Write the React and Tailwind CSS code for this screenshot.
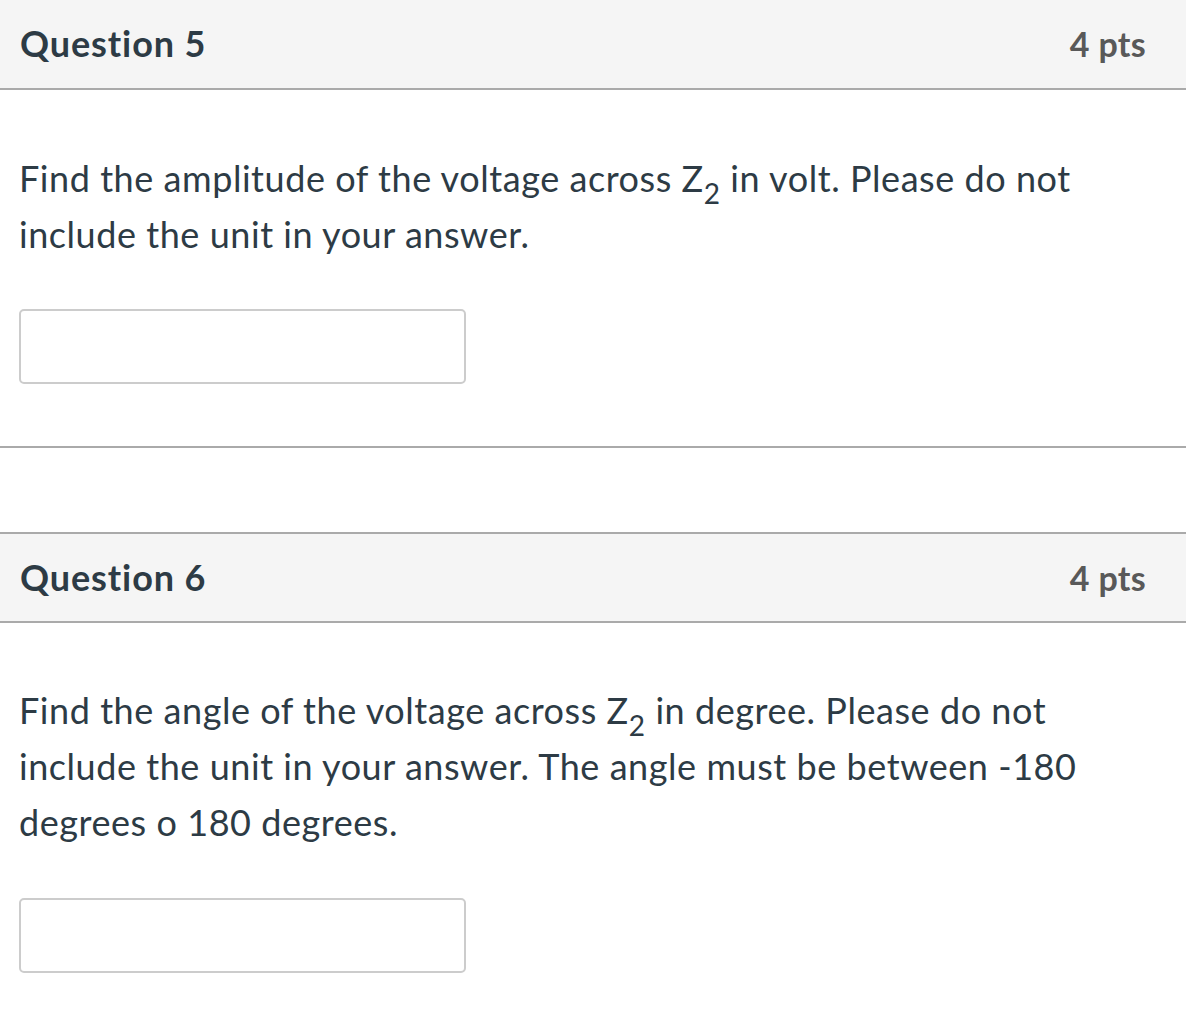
export default function App() {
  const font = { fontFamily: "Lato, 'Noto Sans', sans-serif" };
  return (
    <div className="w-[1186px] h-[1010px] bg-white overflow-hidden text-[#2d3b45]" style={font}>
      <div className="bg-[#f5f5f5] border-b-2 border-[#aaaaaa] h-[90px] flex items-center justify-between pl-[20px] pr-[40px]">
        <div className="text-[36px] font-bold leading-none tracking-[0.9px] pb-[2px]">Question 5</div>
        <div className="text-[34px] font-bold text-[#595959] leading-none tracking-[0.3px]">4 pts</div>
      </div>
      <div className="pl-[19px] pt-[60px]">
        <p className="text-[36px] leading-[56px] tracking-[0.55px] w-[1120px]">
          Find the amplitude of the voltage across Z<sub className="text-[28px] leading-none align-[-5px]">2</sub> in volt. Please do not include the unit in your answer.
        </p>
        <div className="mt-[47px] w-[447px] h-[75px] border-2 border-[#cccccc] rounded-[5px]"></div>
      </div>
      <div className="mt-[62px] border-b-2 border-[#aaaaaa]"></div>
      <div className="mt-[84px] bg-[#f5f5f5] border-y-2 border-[#aaaaaa] h-[91px] flex items-center justify-between pl-[20px] pr-[40px]">
        <div className="text-[36px] font-bold leading-none tracking-[0.9px] pb-[2px]">Question 6</div>
        <div className="text-[34px] font-bold text-[#595959] leading-none tracking-[0.3px]">4 pts</div>
      </div>
      <div className="pl-[19px] pt-[59px]">
        <p className="text-[36px] leading-[56px] tracking-[0.55px] w-[1120px]">
          Find the angle of the voltage across Z<sub className="text-[28px] leading-none align-[-5px]">2</sub> in degree. Please do not include the unit in your answer. The angle must be between -180 degrees o 180 degrees.
        </p>
        <div className="mt-[48px] w-[447px] h-[75px] border-2 border-[#cccccc] rounded-[5px]"></div>
      </div>
    </div>
  );
}
